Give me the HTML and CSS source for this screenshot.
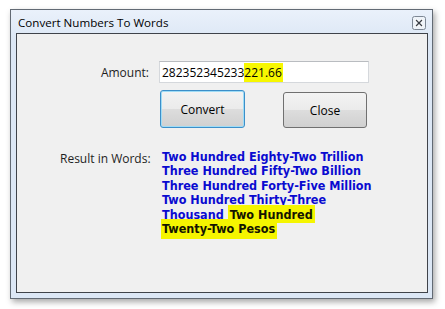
FILE: index.html
```html
<!DOCTYPE html>
<html>
<head>
<meta charset="utf-8">
<link rel="stylesheet" href="styles.css">
</head>
<body>
<div class="window">
  <div class="titlebar">
    <span class="title">Convert Numbers To Words</span>
    <span class="closebox">
      <svg width="14" height="14" viewBox="0 0 14 14">
        <rect x="0.5" y="0.5" width="13" height="13" rx="2" fill="#eef3f9" stroke="#7d8794"/>
        <path d="M4.5 4.5 L9.5 9.5 M9.5 4.5 L4.5 9.5" stroke="#ffffff" stroke-width="3" stroke-linecap="square"/>
        <path d="M4.5 4.5 L9.5 9.5 M9.5 4.5 L4.5 9.5" stroke="#3a3f47" stroke-width="1.3" stroke-linecap="square"/>
      </svg>
    </span>
  </div>
  <div class="client">
    <div class="form">
      <div class="lbl lbl-amount">Amount:</div>
      <div class="input">282352345233<span class="hl">221.66</span></div>
      <div class="spacer"></div>
      <div class="buttons">
        <button class="btn btn-default">Convert</button>
        <button class="btn btn-close">Close</button>
      </div>
      <div class="lbl lbl-result">Result in Words:</div>
      <div class="result">
        <div class="line">Two Hundred Eighty-Two Trillion</div>
        <div class="line">Three Hundred Fifty-Two Billion</div>
        <div class="line">Three Hundred Forty-Five Million</div>
        <div class="line">Two Hundred Thirty-Three</div>
        <div class="line">Thousand <span class="mark mark-a">Two Hundred</span></div>
        <div class="line"><span class="mark mark-b">Twenty-Two Pesos</span></div>
      </div>
    </div>
  </div>
</div>
</body>
</html>
```

FILE: styles.css
```css
html, body {
  margin: 0;
  padding: 0;
  background: #ffffff;
}

body {
  width: 445px;
  height: 309px;
  overflow: hidden;
}

.window {
  margin: 9px 0 0 10px;
  width: 423px;
  height: 290px;
  box-sizing: border-box;
  border: 1px solid #626a74;
  background: linear-gradient(#eaf1fb, #dce7f5 30px, #dce7f5);
  box-shadow: 2px 3px 6px rgba(0, 0, 0, 0.35);
  padding: 0 4px 5px 5px;
  display: flex;
  flex-direction: column;
}

.titlebar {
  height: 23px;
  display: flex;
  align-items: center;
  justify-content: space-between;
  padding: 0 2px 0 2px;
}

.title {
  font-family: "Open Sans", "Noto Sans", sans-serif;
  font-size: 11.6px;
  color: #000000;
  margin-top: 1px;
}

.closebox {
  width: 14px;
  height: 14px;
  display: block;
  margin-top: 3px;
}

.closebox svg {
  display: block;
}

.client {
  flex: 1;
  border: 1px solid #3f434a;
  background: #f0f0f0;
}

.form {
  display: grid;
  grid-template-columns: 89px 210px;
  column-gap: 10px;
  padding: 27px 0 0 43px;
  align-items: center;
}

.lbl {
  font-family: "Open Sans", "Noto Sans", sans-serif;
  font-size: 12px;
  color: #1e1e1e;
  white-space: nowrap;
}

.lbl-amount {
  text-align: right;
}

.input {
  height: 22px;
  box-sizing: border-box;
  border: 1px solid #d5d8dc;
  border-top-color: #b9bcc0;
  background: #ffffff;
  font-family: "Open Sans", "Noto Sans", sans-serif;
  font-size: 12px;
  color: #000000;
  padding: 0 0 0 2px;
  display: flex;
  align-items: center;
  white-space: nowrap;
}

.hl {
  background: #f7f700;
  padding: 1px 1px 1px 0;
}

.buttons {
  grid-column: 2;
  margin-top: 7px;
  display: flex;
  align-items: flex-start;
  gap: 38px;
  padding-left: 1px;
}

.spacer {
  grid-column: 1;
}

.btn {
  font-family: "Open Sans", "Noto Sans", sans-serif;
  font-size: 12px;
  color: #000000;
  border: 1px solid #707070;
  border-radius: 3px;
  background: linear-gradient(#f3f3f3, #ebebeb 50%, #dddddd 50%, #d0d0d0);
  padding: 0;
  margin: 0;
  display: flex;
  align-items: center;
  justify-content: center;
}

.btn-default {
  width: 85px;
  height: 38px;
  border-color: #3c8fc9;
  box-shadow: inset 0 0 0 1px #9fdcf6;
}

.btn-close {
  width: 84px;
  height: 36px;
  margin-top: 2px;
}

.lbl-result {
  align-self: start;
  margin-top: 23px;
  line-height: 16px;
}

.result {
  align-self: start;
  margin-top: 22px;
  padding-left: 3px;
  display: flex;
  flex-direction: column;
  font-family: "DejaVu Sans Condensed", "DejaVu Sans", sans-serif;
  font-weight: bold;
  font-size: 12.5px;
  line-height: 14.4px;
  color: #0a0ad0;
  white-space: nowrap;
}

.mark {
  background: #f5f500;
  color: #141400;
}

.mark-a {
  padding: 2px 2px 1px 2px;
}

.mark-b {
  padding: 2px 2px 3px 1px;
  margin-left: -1px;
}
```
